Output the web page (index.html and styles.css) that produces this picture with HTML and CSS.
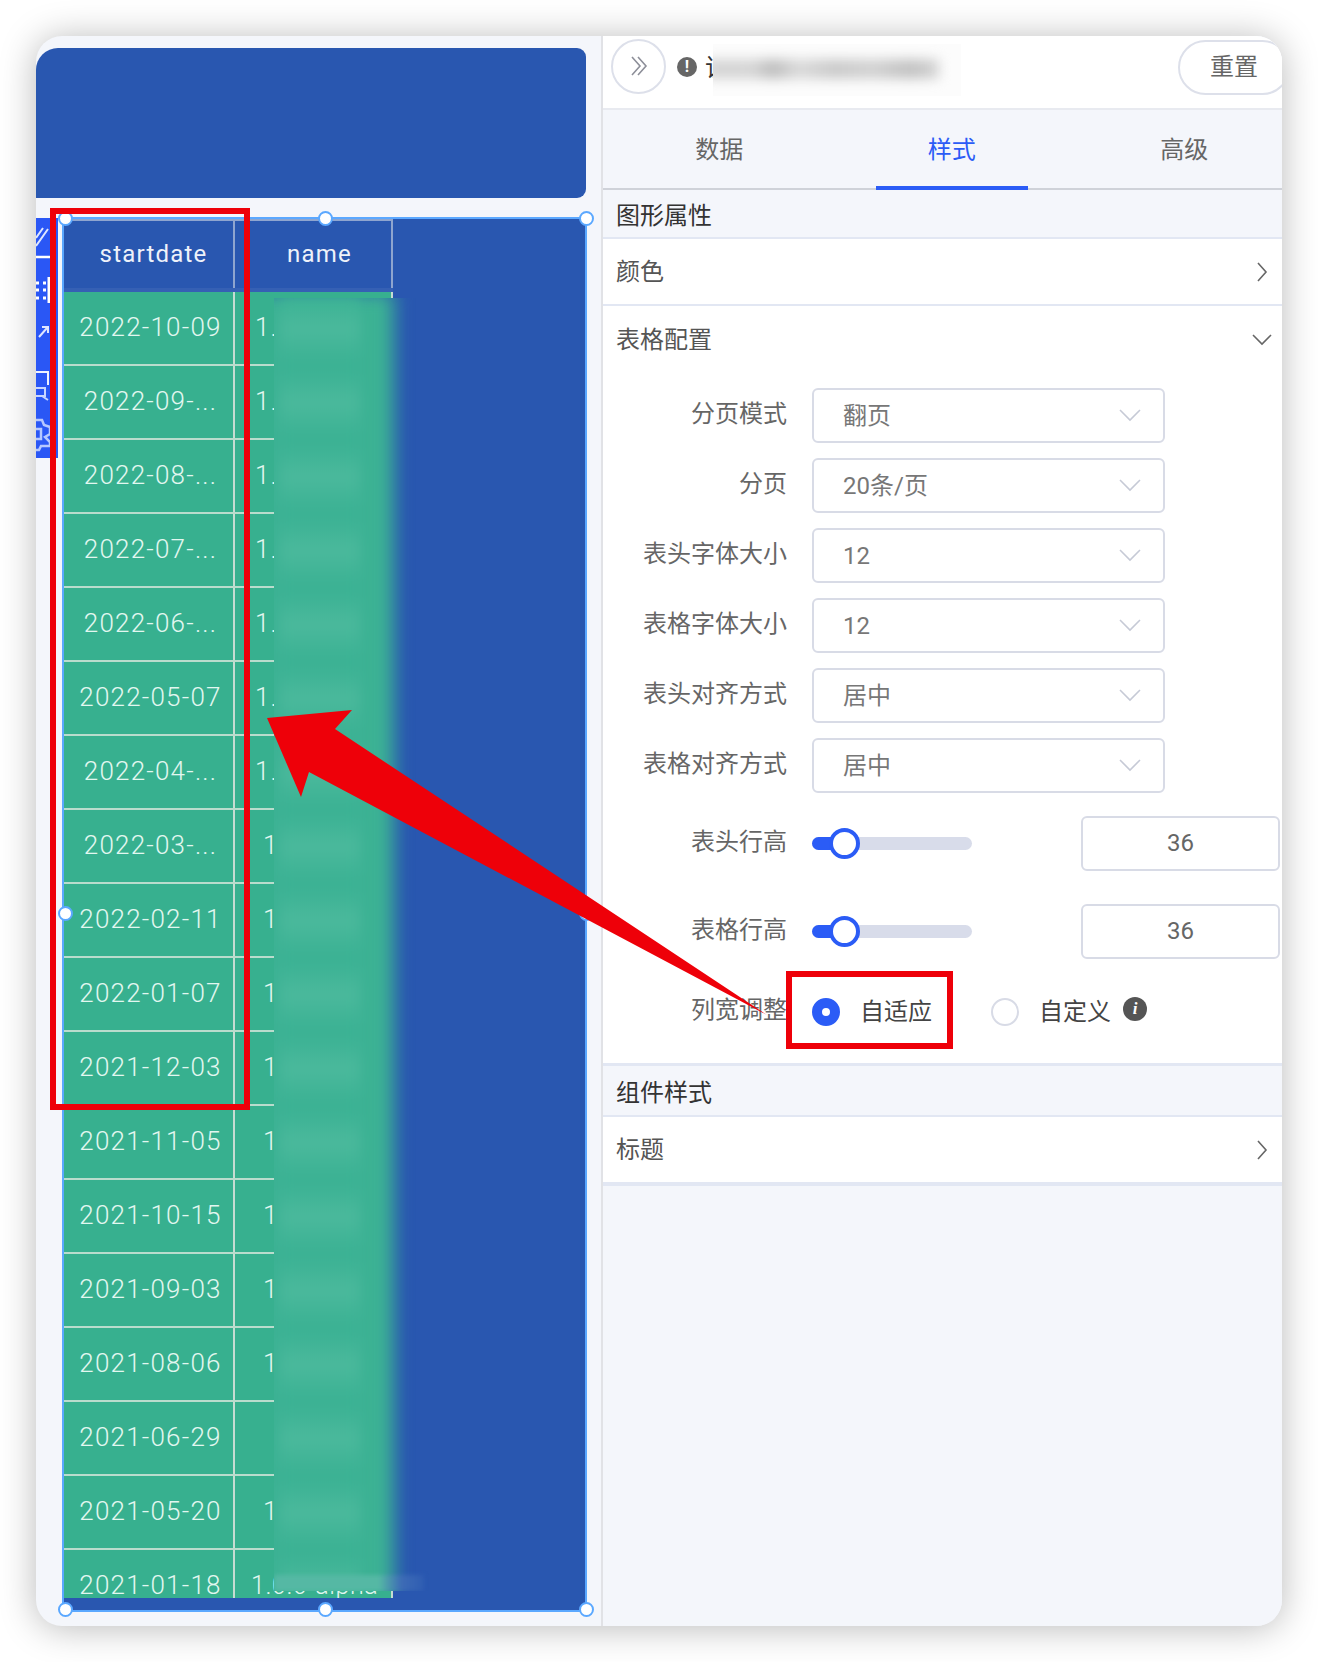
FILE: index.html
```html
<!DOCTYPE html>
<html lang="zh">
<head>
<meta charset="utf-8">
<title>表格配置</title>
<link rel="stylesheet" href="styles.css">
</head>
<body>
<div class="card">
  <section class="canvas">
    <div class="banner"></div>
    <div class="selection">
      <div class="toolbar">
        <svg width="22" height="240" viewBox="0 0 22 240" fill="none" stroke="#fff" stroke-width="2">
          <path d="M0 39H14" stroke-width="2.5"/>
          <path d="M0 28L12 11M0 20L7 10" stroke="#dfe7ff"/>
          <path d="M13 59V85" stroke-width="3"/>
          <path d="M0 65h3M0 72h3M0 80h3M7 65h3M7 72h3M7 80h3" stroke-width="3"/>
          <path d="M3 119L11 110M6 109H12V115" stroke="#dfe7ff"/>
          <path d="M0 154H12V167" stroke="#eef2ff"/>
          <path d="M0 170H9V178H0M6 178L12 182" stroke="#c9d6ff"/>
          <path d="M0 202H6L8 207L14 209V216L9 219L14 224V228H5L3 232H0M0 211H5V221H0" stroke="#b6c8ff" stroke-width="2.5"/>
        </svg>
      </div>
      <div class="table">
        <div class="row head"><div class="cell first">startdate</div><div class="cell second center">name</div></div>
        <div class="row"><div class="cell first">2022-10-09</div><div class="cell second long">1.</div></div>
        <div class="row"><div class="cell first">2022-09-...</div><div class="cell second long">1.</div></div>
        <div class="row"><div class="cell first">2022-08-...</div><div class="cell second long">1.</div></div>
        <div class="row"><div class="cell first">2022-07-...</div><div class="cell second long">1.</div></div>
        <div class="row"><div class="cell first">2022-06-...</div><div class="cell second long">1.</div></div>
        <div class="row"><div class="cell first">2022-05-07</div><div class="cell second long">1.</div></div>
        <div class="row"><div class="cell first">2022-04-...</div><div class="cell second long">1.</div></div>
        <div class="row"><div class="cell first">2022-03-...</div><div class="cell second short">1</div></div>
        <div class="row"><div class="cell first">2022-02-11</div><div class="cell second short">1</div></div>
        <div class="row"><div class="cell first">2022-01-07</div><div class="cell second short">1</div></div>
        <div class="row"><div class="cell first">2021-12-03</div><div class="cell second short">1</div></div>
        <div class="row"><div class="cell first">2021-11-05</div><div class="cell second short">1</div></div>
        <div class="row"><div class="cell first">2021-10-15</div><div class="cell second short">1</div></div>
        <div class="row"><div class="cell first">2021-09-03</div><div class="cell second short">1</div></div>
        <div class="row"><div class="cell first">2021-08-06</div><div class="cell second short">1</div></div>
        <div class="row"><div class="cell first">2021-06-29</div><div class="cell second short"></div></div>
        <div class="row"><div class="cell first">2021-05-20</div><div class="cell second short">1</div></div>
        <div class="row"><div class="cell first">2021-01-18</div><div class="cell second tail">1.0.0-alpha</div></div>
      </div>
      <div class="smear">
        <div class="smear-fill"></div>
        <div class="smear-glow"></div>
        <div class="smear-foot"></div>
      </div>
      <i class="handle h-tl"></i><i class="handle h-tm"></i><i class="handle h-tr"></i>
      <i class="handle h-ml"></i><i class="handle h-mr"></i>
      <i class="handle h-bl"></i><i class="handle h-bm"></i><i class="handle h-br"></i>
    </div>
  </section>

  <section class="panel">
    <header class="topbar">
      <button class="round">
        <svg width="20" height="24" viewBox="0 0 20 24" fill="none" stroke="#8d8f99" stroke-width="1.6"><path d="M3 3l8 9-8 9M9 3l8 9-8 9"/></svg>
      </button>
      <span class="alert">!</span>
      <span class="notice">该</span>
      <div class="redact"><div class="redact-ink"></div></div>
      <button class="reset">重置</button>
    </header>
    <nav class="tabs">
      <div class="tab">数据</div>
      <div class="tab active">样式</div>
      <div class="tab">高级</div>
    </nav>
    <h2 class="group">图形属性</h2>
    <div class="fold">
      <span>颜色</span>
      <svg class="fold-icon" width="12" height="20" viewBox="0 0 12 20" fill="none" stroke="#666" stroke-width="1.6"><path d="M2 1l8 9-8 9"/></svg>
    </div>
    <div class="fold open">
      <span>表格配置</span>
      <svg class="fold-icon" width="20" height="12" viewBox="0 0 20 12" fill="none" stroke="#666" stroke-width="1.6"><path d="M1 1l9 9 9-9"/></svg>
    </div>
    <div class="form">
      <div class="field"><label>分页模式</label><div class="select"><span>翻页</span><svg width="22" height="13" viewBox="0 0 22 13" fill="none" stroke="#c6cad6" stroke-width="1.6"><path d="M1 1l10 10L21 1"/></svg></div></div>
      <div class="field"><label>分页</label><div class="select"><span>20条/页</span><svg width="22" height="13" viewBox="0 0 22 13" fill="none" stroke="#c6cad6" stroke-width="1.6"><path d="M1 1l10 10L21 1"/></svg></div></div>
      <div class="field"><label>表头字体大小</label><div class="select"><span>12</span><svg width="22" height="13" viewBox="0 0 22 13" fill="none" stroke="#c6cad6" stroke-width="1.6"><path d="M1 1l10 10L21 1"/></svg></div></div>
      <div class="field"><label>表格字体大小</label><div class="select"><span>12</span><svg width="22" height="13" viewBox="0 0 22 13" fill="none" stroke="#c6cad6" stroke-width="1.6"><path d="M1 1l10 10L21 1"/></svg></div></div>
      <div class="field"><label>表头对齐方式</label><div class="select"><span>居中</span><svg width="22" height="13" viewBox="0 0 22 13" fill="none" stroke="#c6cad6" stroke-width="1.6"><path d="M1 1l10 10L21 1"/></svg></div></div>
      <div class="field"><label>表格对齐方式</label><div class="select"><span>居中</span><svg width="22" height="13" viewBox="0 0 22 13" fill="none" stroke="#c6cad6" stroke-width="1.6"><path d="M1 1l10 10L21 1"/></svg></div></div>
      <div class="field slide first-slide"><label>表头行高</label><div class="slider"><i class="slider-fill"></i><i class="slider-thumb"></i></div><div class="number">36</div></div>
      <div class="field slide"><label>表格行高</label><div class="slider"><i class="slider-fill"></i><i class="slider-thumb"></i></div><div class="number">36</div></div>
      <div class="field radios"><label>列宽调整</label>
        <span class="radio on"></span><span class="radio-text">自适应</span>
        <span class="radio off"></span><span class="radio-text">自定义</span>
        <span class="info">i</span>
      </div>
    </div>
    <h2 class="group second-group">组件样式</h2>
    <div class="fold last">
      <span>标题</span>
      <svg class="fold-icon" width="12" height="20" viewBox="0 0 12 20" fill="none" stroke="#666" stroke-width="1.6"><path d="M2 1l8 9-8 9"/></svg>
    </div>
  </section>
</div>
<svg class="annotation" width="1318" height="1662" viewBox="0 0 1318 1662">
  <rect x="53" y="211" width="194" height="896" fill="none" stroke="#ee0009" stroke-width="6"/>
  <rect x="789" y="974" width="161" height="72" fill="none" stroke="#ee0009" stroke-width="6"/>
  <polygon points="267,718 352,710 335,729 767,1015 309,772 301,797" fill="#ee0009"/>
</svg>
</body>
</html>
```
FILE: styles.css
```css
* { box-sizing: border-box; }
html, body { margin: 0; padding: 0; }
body {
  width: 1318px;
  height: 1662px;
  padding: 36px;
  background: #fff;
  position: relative;
  overflow: hidden;
  font-family: Roboto, "Noto Sans CJK SC", sans-serif;
}
.card {
  width: 1246px;
  height: 1590px;
  display: flex;
  border-radius: 26px;
  overflow: hidden;
  background: #f4f6fb;
  box-shadow: 0 2px 36px rgba(0, 0, 0, .28);
}
.canvas {
  width: 567px;
  flex: none;
  padding-top: 12px;
  border-right: 2px solid #e1e2e6;
}
.banner {
  width: 550px;
  height: 150px;
  background: #2957b0;
  border-radius: 22px 9px 9px 0;
}
.selection {
  position: relative;
  width: 525px;
  height: 1395px;
  margin: 19px 0 0 26px;
  background: #2957b0;
  border: 2px solid #5ba8ff;
}
.toolbar {
  position: absolute;
  left: -28px;
  top: -1px;
  width: 22px;
  height: 240px;
  background: #2a57f5;
}
.toolbar svg { display: block; }
.table {
  position: relative;
  width: 329px;
  height: 1379px;
  overflow: hidden;
  color: #e2f7f0;
  font-size: 26px;
  font-weight: 300;
  letter-spacing: 1.2px;
  background: #37b08f;
}
.row {
  display: grid;
  grid-template-columns: 171px 158px;
  height: 74px;
  border-bottom: 2px solid #b9dccd;
}
.row .cell {
  display: flex;
  align-items: center;
  justify-content: center;
  height: 100%;
  white-space: nowrap;
}
.row .first { border-right: 2px solid #c5dcd2; padding: 0 0 2px 4px; }
.row .second { border-right: 2px solid #c5dcd2; padding-bottom: 2px; }
.row .long { justify-content: flex-start; padding-left: 20px; }
.row .short { justify-content: flex-start; padding-left: 28px; }
.row .tail {
  justify-content: flex-start;
  padding-left: 16px;
  font-size: 25px;
  letter-spacing: .6px;
}
.row.head {
  height: 73px;
  background: #2957b0;
  color: #eef2fa;
  font-size: 24px;
  font-weight: 400;
  border-top: 2px solid #8ea5cf;
  border-bottom: 4px solid #3560b4;
}
.row.head .first { border-color: #8ea5cf; padding-left: 10px; }
.row.head .second { border-color: #8ea5cf; padding-left: 13px; }
.smear {
  position: absolute;
  left: 210px;
  top: 79px;
  width: 158px;
  height: 1293px;
  overflow: hidden;
  background: #2957b0;
}
.smear-fill {
  position: absolute;
  left: -30px;
  top: -6px;
  width: 150px;
  height: 1320px;
  background: #3cb294;
  filter: blur(9px);
}
.smear-glow {
  position: absolute;
  left: 6px;
  top: 0;
  width: 80px;
  height: 1293px;
  background: repeating-linear-gradient(#3cb294 0, #4bb99c 31px, #3cb294 62px, #3cb294 74px);
  filter: blur(6px);
}
.smear-foot {
  position: absolute;
  left: 0;
  bottom: 0;
  width: 150px;
  height: 16px;
  background: linear-gradient(to right, #55b8a4 0, #55b8a4 70%, #3d6bb6 85%, #2f5db2 100%);
  filter: blur(2px);
}
.handle {
  position: absolute;
  width: 15px;
  height: 15px;
  margin: -8.5px 0 0 -6.5px;
  border-radius: 50%;
  background: #fff;
  border: 2.5px solid #5ba8ff;
}
.h-tl, .h-ml, .h-bl { left: 0; }
.h-tm, .h-bm { left: 50%; }
.h-tr, .h-mr, .h-br { left: 100%; }
.h-tl, .h-tm, .h-tr { top: 0; }
.h-ml, .h-mr { top: 50%; }
.h-bl, .h-bm, .h-br { top: 100%; }

.panel {
  flex: 1;
  min-width: 0;
  background: #f4f6fb;
  font-size: 24px;
  line-height: 32px;
  color: #666;
  font-family: Roboto, "Noto Sans CJK SC", sans-serif;
}
.topbar {
  position: relative;
  display: flex;
  align-items: center;
  height: 74px;
  padding: 0 0 10px 8px;
  background: #fff;
  border-bottom: 2px solid #e8eaf0;
}
.round {
  width: 55px;
  height: 55px;
  margin-top: -2px;
  border: 2px solid #dde0ea;
  border-radius: 50%;
  background: #fff;
  padding: 0;
  display: flex;
  align-items: center;
  justify-content: center;
}
.alert {
  width: 20px;
  height: 20px;
  margin-left: 11px;
  border-radius: 50%;
  background: #666;
  color: #fff;
  font-size: 16px;
  font-weight: 700;
  line-height: 20px;
  text-align: center;
}
.notice { margin-left: 8px; color: #333; width: 24px; white-space: nowrap; position: relative; top: 1px; }
.redact {
  position: absolute;
  left: 110px;
  top: 8px;
  width: 248px;
  height: 52px;
  background: #fcfcfc;
  overflow: hidden;
}
.redact-ink {
  position: absolute;
  left: -8px;
  top: 15px;
  width: 234px;
  height: 20px;
  background: linear-gradient(to right, #d4d4d4 0, #d6d6d6 20%, #bebebe 29%, #dadada 40%, #cbcbcb 55%, #d2d2d2 72%, #c2c2c2 88%, #d6d6d6 100%);
  filter: blur(6px);
}
.reset {
  margin-left: auto;
  margin-right: -8px;
  width: 112px;
  height: 55px;
  border: 2px solid #dde0ea;
  border-radius: 28px;
  background: #fff;
  color: #666;
  font: inherit;
  padding: 0;
  text-align: center;
}
.tabs {
  display: grid;
  grid-template-columns: repeat(3, 232.5px);
  height: 80px;
  border-bottom: 2px solid #cfd2d9;
}
.tab {
  display: flex;
  align-items: center;
  justify-content: center;
  position: relative;
  padding-top: 2px;
}
.tab.active { color: #2b5cf6; }
.tab.active::after {
  content: "";
  position: absolute;
  left: 40px;
  right: 40px;
  bottom: -2px;
  height: 4px;
  background: #2b5cf6;
}
.group {
  margin: 0;
  height: 49px;
  padding: 10px 0 0 13px;
  font-size: 24px;
  font-weight: 400;
  line-height: 32px;
  color: #333;
  background: #f4f6fb;
  border-bottom: 2px solid #e2e7f3;
}
.second-group {
  height: 54px;
  padding-top: 11px;
  border-top: 3px solid #e2e7f3;
}
.fold {
  display: flex;
  align-items: center;
  justify-content: space-between;
  height: 67px;
  padding: 0 14px 0 13px;
  background: #fff;
  border-bottom: 2px solid #e2e7f3;
  color: #555;
}
.fold.open { height: 68px; border-bottom: 0; padding-right: 10px; }
.fold.last { height: 69px; border-bottom: 4px solid #e2e7f3; }
.form {
  height: 689px;
  padding-top: 14px;
  background: #fff;
}
.field {
  display: flex;
  align-items: center;
  height: 55px;
  margin-bottom: 15px;
  padding-right: 2px;
}
.field label {
  width: 184px;
  flex: none;
  margin-right: 25px;
  text-align: right;
  position: relative;
  top: -2px;
}
.select {
  width: 353px;
  height: 55px;
  display: flex;
  align-items: center;
  justify-content: space-between;
  padding: 0 22px 0 29px;
  border: 2px solid #d8dbe6;
  border-radius: 6px;
  color: #777;
}
.first-slide { margin-top: 23px; margin-bottom: 33px; }
.slider {
  position: relative;
  width: 160px;
  height: 13px;
  border-radius: 7px;
  background: #d8dcea;
}
.slider-fill {
  position: absolute;
  left: 0;
  top: 0;
  width: 24px;
  height: 13px;
  border-radius: 7px 0 0 7px;
  background: #2b5cf6;
}
.slider-thumb {
  position: absolute;
  left: 17px;
  top: -9px;
  width: 31px;
  height: 31px;
  border-radius: 50%;
  background: #fff;
  border: 4px solid #2b5cf6;
}
.number {
  margin-left: auto;
  width: 199px;
  height: 55px;
  border: 2px solid #d8dbe6;
  border-radius: 6px;
  text-align: center;
  line-height: 50px;
}
.radios {
  height: 50px;
  margin-top: 28px;
  margin-bottom: 0;
}
.radio {
  flex: none;
  width: 28px;
  height: 28px;
  border-radius: 50%;
}
.radio.on {
  background: #fff;
  border: 10px solid #2b5cf6;
}
.radio.off {
  margin-left: 59px;
  background: #fff;
  border: 2px solid #d8dbe6;
}
.radio-text { margin-left: 20px; color: #444; }
.info {
  margin: -6px 0 0 12px;
  width: 24px;
  height: 24px;
  border-radius: 50%;
  background: #555;
  color: #fff;
  font: italic 700 17px/24px "Liberation Serif", serif;
  text-align: center;
}
.annotation {
  position: absolute;
  left: 0;
  top: 0;
  pointer-events: none;
}
```
